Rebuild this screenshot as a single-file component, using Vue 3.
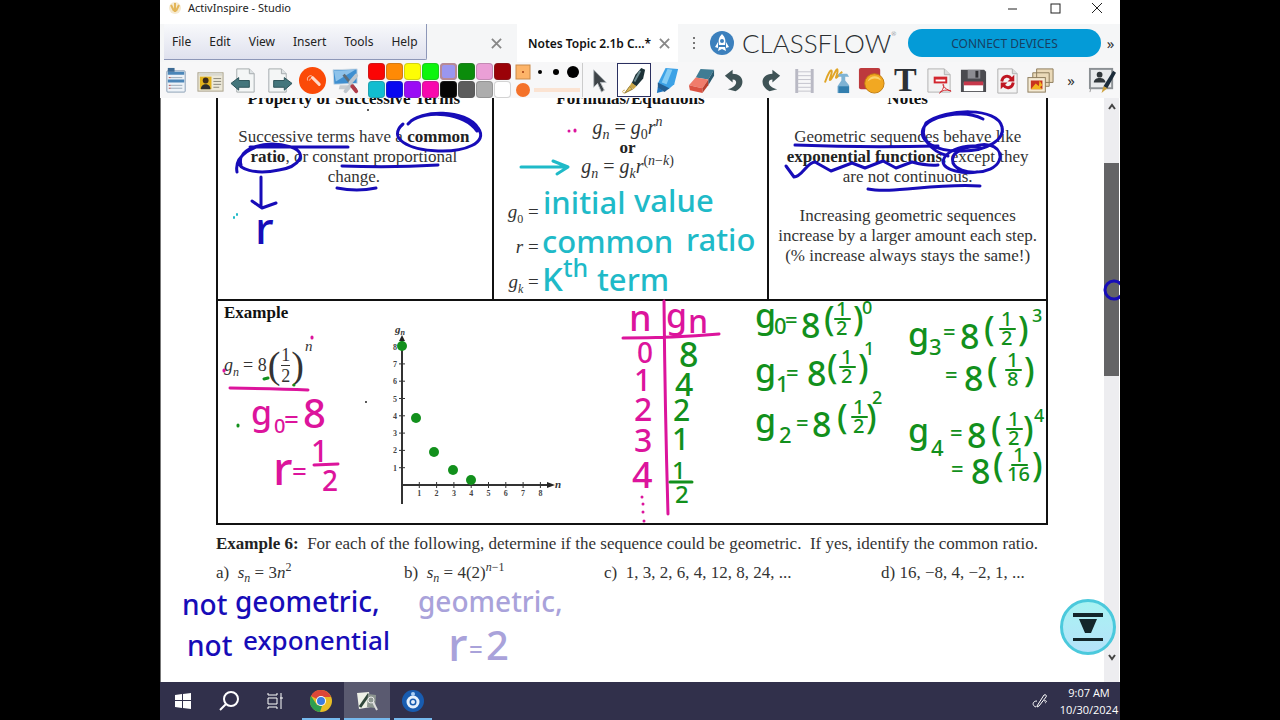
<script setup>
const menus = ['File', 'Edit', 'View', 'Insert', 'Tools', 'Help']

const swatches = [
  ['Red', '#fb0505'], ['Orange', '#ff8a05'], ['Yellow', '#fdfd05'], ['Lime', '#0df50d'],
  ['Lavender', '#9a96f0'], ['Green', '#0b8c0b'], ['Pink', '#ea9fd6'], ['Dark red', '#9b0208'],
  ['Cyan', '#12bdd0'], ['Blue', '#0808f0'], ['Violet', '#9a0cf5'], ['Magenta', '#f808ae'],
  ['Black', '#050505'], ['Dark grey', '#5c5c5c'], ['Grey', '#adadad'], ['White', '#ffffff']
]

const leftTools = ['browser', 'profile', 'prev', 'next', 'annotate', 'desktop']
const rightTools = ['select', 'pen', 'highlighter', 'eraser', 'undo', 'redo', 'grid', 'clear', 'shapes', 'text', 'pdf', 'save', 'reset', 'media']

const CYAN = '#1fbac8'
const BLUE = '#170cb8'
const PINK = '#dc149c'
const GREEN = '#12901c'
const LILAC = '#a9a2da'

// Each note is one written phrase; parts are [x, baseline, size, text].
const notes = [
  { c: BLUE, p: [[255, 244, 44, 'r']] },
  { c: CYAN, p: [[543, 214, 31, 'initial'], [634, 212, 31, 'value']] },
  { c: CYAN, p: [[542, 253, 31, 'common'], [686, 251, 31, 'ratio']] },
  { c: CYAN, p: [[542, 291, 33, 'K'], [563, 277, 25, 'th'], [597, 291, 31, 'term']] },
  { c: PINK, p: [[251, 425, 34, 'g'], [274, 433, 20, '0'], [284, 428, 26, '='], [303, 428, 40, '8']] },
  { c: PINK, p: [[273, 485, 46, 'r'], [292, 480, 26, '='], [311, 462, 30, '1'], [322, 491, 28, '2']] },
  { c: PINK, p: [[629, 331, 36, 'n']] },
  { c: PINK, p: [[666, 328, 34, 'g'], [688, 333, 32, 'n']] },
  { c: PINK, p: [[637, 363, 28, '0']] },
  { c: PINK, p: [[634, 391, 30, '1']] },
  { c: PINK, p: [[634, 421, 32, '2']] },
  { c: PINK, p: [[634, 452, 32, '3']] },
  { c: PINK, p: [[632, 488, 36, '4']] },
  { c: GREEN, p: [[679, 367, 34, '8']] },
  { c: GREEN, p: [[675, 396, 32, '4']] },
  { c: GREEN, p: [[673, 421, 30, '2']] },
  { c: GREEN, p: [[672, 450, 30, '1']] },
  { c: GREEN, p: [[672, 479, 24, '1'], [675, 503, 24, '2']] },
  { c: BLUE, p: [[182, 615, 28, 'not'], [235, 612, 28, 'geometric,']] },
  { c: BLUE, p: [[187, 656, 28, 'not'], [243, 650, 26, 'exponential']] },
  { c: LILAC, p: [[418, 612, 28, 'geometric,']] },
  { c: LILAC, p: [[448, 661, 46, 'r'], [469, 658, 24, '='], [486, 660, 40, '2']] }
]

// One written term: g(sub) = 8(1/den)^sup. g and sub are left out on continued lines.
const terms = [
  { g: [755, 328], sub: [774, 334, '0'], eq: [785, 328], e: [801, 338], l: 824, f: 842, y: 319, den: '2', r: 853, sup: [862, 314, '0'] },
  { g: [755, 383], sub: [776, 392, '1'], eq: [786, 381], e: [807, 386], l: 827, f: 847, y: 367, den: '2', r: 858, sup: [864, 355, '1'] },
  { g: [755, 433], sub: [779, 443, '2'], eq: [796, 431], e: [812, 437], l: 837, f: 859, y: 417, den: '2', r: 866, sup: [872, 404, '2'] },
  { g: [908, 347], sub: [929, 355, '3'], eq: [943, 340], e: [960, 349], l: 984, f: 1007, y: 329, den: '2', r: 1018, sup: [1032, 322, '3'] },
  { eq: [945, 383], e: [964, 391], l: 987, f: 1013, y: 370, den: '8', r: 1024 },
  { g: [908, 443], sub: [931, 456, '4'], eq: [950, 441], e: [967, 448], l: 991, f: 1014, y: 429, den: '2', r: 1023, sup: [1034, 422, '4'] },
  { eq: [951, 477], e: [971, 484], l: 993, f: 1019, y: 465, den: '16', r: 1032 }
]

const ticks = [1, 2, 3, 4, 5, 6, 7, 8]
const points = [[22, 27], [36, 99], [54, 133], [73, 151], [91, 161]]
</script>

<template>
  <main class="stage">
    <div class="screen">
      <header class="titlebar">
        <svg class="app-mark" viewBox="0 0 14 14"><circle cx="7" cy="7" r="6" fill="#f6ead0" /><path d="M3 4l3 6M7 2v9M11 4l-3 6" stroke="#e3b659" fill="none" stroke-width="2" /></svg>
        <span class="app-name">ActivInspire - Studio</span>
        <button class="win" aria-label="Minimise"><svg viewBox="0 0 12 12"><path d="M1 7h9" /></svg></button>
        <button class="win" aria-label="Maximise"><svg viewBox="0 0 12 12"><rect x="2" y="2" width="9" height="9" /></svg></button>
        <button class="win" aria-label="Close"><svg viewBox="0 0 12 12"><path d="M1 1l10 10M11 1L1 11" /></svg></button>
      </header>

      <div class="tabrow">
        <nav class="menu">
          <button v-for="m in menus" :key="m">{{ m }}</button>
        </nav>
        <button class="tab-x lone" aria-label="Close tab"><svg viewBox="0 0 12 12"><path d="M1 1l10 10M11 1L1 11" /></svg></button>
        <div class="tab">
          <span>Notes Topic 2.1b C...*</span>
          <button class="tab-x" aria-label="Close Notes Topic 2.1b"><svg viewBox="0 0 12 12"><path d="M1 1l10 10M11 1L1 11" /></svg></button>
        </div>
        <button class="dots" aria-label="More tabs"><svg viewBox="0 0 4 14"><path d="M1 2h2M1 7h2M1 12h2" stroke="#777" stroke-width="2" /></svg></button>
        <svg class="rocket" viewBox="0 0 24 24">
          <circle cx="12" cy="12" r="12" fill="#3c80bd" />
          <path d="M12 3c3 3 4 6 3 11H9c-1-5 0-8 3-11zM8 11l-3 5 3 1zM16 11l3 5-3 1zM9 16h6l1 4-4-2-4 2z" fill="#fff" />
          <circle cx="12" cy="10" r="2" fill="#3c80bd" />
        </svg>
        <div class="brand">CLASSFLOW<sup>®</sup></div>
        <button class="connect">CONNECT DEVICES</button>
        <button class="more" aria-label="More">»</button>
      </div>

      <div class="toolbar">
        <div class="left-tools">
          <button v-for="t in leftTools" :key="t" class="tool" :aria-label="t">
            <svg v-if="t === 'browser'" viewBox="0 0 30 30">
              <rect x="5" y="5" width="19" height="22" rx="1" fill="#eef3f8" stroke="#8ba0b5" /><path d="M6 6h17v3H6zM6 14h17v3H6z" fill="#4b86b8" />
              <path d="M6 2h7v4H6z" fill="#3d6b95" /><path d="M9 12h12M9 20h12M9 23h12" stroke="#9aabba" /><path d="M7 12h2M7 20h2M7 23h2" stroke="#b34a4a" />
            </svg>
            <svg v-else-if="t === 'profile'" viewBox="0 0 30 30">
              <rect x="2" y="7" width="26" height="19" fill="#ece8d8" stroke="#a9a28b" /><path d="M3 7h24v3H3z" fill="#d8d8cf" /><rect x="4" y="11" width="12" height="13" fill="#e2b21c" />
              <circle cx="10" cy="15" r="3" fill="#3b2a1a" /><path d="M5 24c0-7 10-7 10 0z" fill="#2c2c2c" /><path d="M18 13h8M18 16h8M18 19h8M18 22h6" stroke="#8a8779" />
            </svg>
            <svg v-else-if="t === 'prev'" viewBox="0 0 30 30">
              <path d="M7 3h13l5 5v19H7z" fill="#f4f6f6" stroke="#a5abad" /><path d="M20 3v5h5" fill="#dde2e4" stroke="#a5abad" /><path d="M1 18l8-6v3h11v7H9v3z" fill="#44767c" stroke="#2d5358" />
            </svg>
            <svg v-else-if="t === 'next'" viewBox="0 0 30 30">
              <path d="M5 3h13l5 5v19H5z" fill="#f4f6f6" stroke="#a5abad" /><path d="M18 3v5h5" fill="#dde2e4" stroke="#a5abad" /><path d="M29 18l-8-6v3H10v7h11v3z" fill="#44767c" stroke="#2d5358" />
            </svg>
            <svg v-else-if="t === 'annotate'" viewBox="0 0 30 30">
              <circle cx="15" cy="15" r="14" fill="#fb4a08" /><path d="M15 12l7 7" stroke="#ffd9c9" stroke-width="3" stroke-linecap="round" /><path d="M10 15c-1-3 1-5 4-5M12 15c0-1 1-2 2-2" stroke="#ffd9c9" fill="none" />
            </svg>
            <svg v-else viewBox="0 0 30 30">
              <path d="M1 4l25-1v15L2 19z" fill="#3f8fd0" stroke="#cfdce6" /><path d="M2 5l22-1L4 16z" fill="#8dc2ea" /><path d="M8 20h9l2 4H7z" fill="#c7ccd0" />
              <path d="M12 9l13 16" stroke="#5f6d78" stroke-width="3" /><path d="M25 10l-6 7M14 26l6-7" stroke="#bfc7ce" stroke-width="4" stroke-linecap="round" /><path d="M21 21l4 5" stroke="#b03c48" stroke-width="4" stroke-linecap="round" />
            </svg>
          </button>
        </div>
        <div class="palette">
          <button v-for="s in swatches" :key="s[0]" class="swatch" :class="{ chosen: s[0] === 'Lavender' }" :style="{ background: s[1] }" :aria-label="s[0]"></button>
        </div>
        <svg class="widths" viewBox="0 0 68 36">
          <rect x="2" y="3" width="14" height="14" fill="#fdb469" stroke="#c98a4a" /><circle cx="9" cy="10" r="1" fill="#a03a10" />
          <circle cx="26" cy="10" r="2" /><circle cx="42" cy="10" r="3" /><circle cx="59" cy="10" r="6" />
          <path d="M20 28h46" stroke="#fbe3d2" stroke-width="4" /><circle cx="9" cy="28" r="7" fill="#f4722a" />
        </svg>
        <div class="right-tools">
          <button v-for="t in rightTools" :key="t" class="tool" :class="{ active: t === 'pen' }" :aria-label="t">
            <svg v-if="t === 'select'" viewBox="0 0 30 30"><path d="M9 4l13 13-6 0 4 8-3 2-4-9-4 4z" fill="#3e4448" stroke="#b9bec2" /></svg>
            <svg v-else-if="t === 'pen'" viewBox="0 0 30 30">
              <path d="M23 2l4 2-2 9-7 8-5-3 4-9z" fill="#1d3237" /><path d="M22 5l-6 11" stroke="#6d8c92" stroke-width="2" /><path d="M13 17l5 4-3 3-4-3z" fill="#c9a548" /><path d="M11 21l3 3-8 4z" fill="#e0bb55" stroke="#8f7834" /><path d="M6 28c-3 0-3-3 0-3" stroke="#cda752" fill="none" />
            </svg>
            <svg v-else-if="t === 'highlighter'" viewBox="0 0 30 30"><path d="M13 2l13 1-4 16-6 5-11-6z" fill="#3da2e6" /><path d="M15 3l5 1-6 15-5-2z" fill="#84cdf5" /><path d="M5 17l12 6-5 4-7-4z" fill="#235f93" /><path d="M5 22l6 4-7 2z" fill="#1d74be" /></svg>
            <svg v-else-if="t === 'eraser'" viewBox="0 0 30 30"><path d="M14 3l14 1-6 10-13-2z" fill="#3f7c94" /><path d="M28 4v6l-6 10v-6z" fill="#2b5b70" /><path d="M9 12l13 2-6 9-14-3z" fill="#f07c6b" /><path d="M2 20l14 3v5L3 25z" fill="#dc5242" /><path d="M22 14v6l-6 8v-5z" fill="#b8402f" /></svg>
            <svg v-else-if="t === 'undo'" viewBox="0 0 30 30"><path d="M4 10l8-6v4c12 0 14 13 3 18l-8-2c10-2 11-10 5-10v3z" fill="#3f5356" /></svg>
            <svg v-else-if="t === 'redo'" viewBox="0 0 30 30"><path d="M26 10l-8-6v4C6 8 4 21 15 26l8-2c-10-2-11-10-5-10v3z" fill="#3f5356" /></svg>
            <svg v-else-if="t === 'grid'" viewBox="0 0 30 30"><path d="M8 3v25M24 3v25" stroke="#b9b9c4" stroke-width="3" /><path d="M9 6h14M9 10h14M9 14h14M9 18h14M9 22h14M9 26h14" stroke="#c3c3cc" /></svg>
            <svg v-else-if="t === 'clear'" viewBox="0 0 30 30"><path d="M2 17C5 8 8 3 9 5s-4 12-1 9 6-13 7-10-3 9-1 8 4-5 6-6" stroke="#e0a527" stroke-width="2" fill="none" /><path d="M16 8h9l2 3h-4v4l4 5v8H15v-7l4-6v-4h-3z" fill="#7fb3d4" /><path d="M16 21h11v7H16z" fill="#327eae" /></svg>
            <svg v-else-if="t === 'shapes'" viewBox="0 0 30 30"><rect x="2" y="2" width="22" height="22" rx="2" fill="#bd3a3d" /><circle cx="18" cy="18" r="10" fill="#f2a822" stroke="#c17d11" /><path d="M11 16c2-7 12-7 14-1-5-3-9-3-14 1z" fill="#fbd36a" /></svg>
            <span v-else-if="t === 'text'" class="tee">T</span>
            <svg v-else-if="t === 'pdf'" viewBox="0 0 30 30"><path d="M3 3h17l6 6v18H3z" fill="#f2f2f2" stroke="#b1b1b1" /><path d="M20 3v6h6" fill="#ddd" stroke="#b1b1b1" /><path d="M9 11h14v7H9z" fill="#d2262e" /><path d="M11 15h10" stroke="#fff" stroke-width="2" /><path d="M15 28c4-3 5-8 4-9s-1 4 8 7c-5-2-9-1-12 2z" stroke="#d2262e" fill="none" /></svg>
            <svg v-else-if="t === 'save'" viewBox="0 0 30 30"><path d="M2 4h24l2 2v21H2z" fill="#4b4b50" /><path d="M9 4h13v9H9z" fill="#8c8c92" /><path d="M17 5h3v7h-3z" fill="#303034" /><path d="M5 17h20v9H5z" fill="#fff" /><path d="M5 16h20v4H5z" fill="#c7384b" /></svg>
            <svg v-else-if="t === 'reset'" viewBox="0 0 30 30"><path d="M5 3h15l5 5v20H5z" fill="#f4f4f4" stroke="#b1b1b1" /><path d="M20 3v5h5" fill="#ddd" stroke="#b1b1b1" /><path d="M9 16c1-6 7-7 10-3M21 17c-1 6-7 7-10 3" stroke="#c01722" stroke-width="3" fill="none" /><path d="M22 9v7h-7zM8 24v-7h7z" fill="#c01722" /></svg>
            <svg v-else viewBox="0 0 30 30"><path d="M11 3h17v14H11zM7 7h17v14H7z" fill="#ead9b8" stroke="#8d7b5b" /><rect x="2" y="12" width="18" height="15" fill="#f4ead3" stroke="#8d7b5b" /><path d="M5 15h12v9H5z" fill="#c8341f" /><path d="M5 24l5-6 7 6zM14 15l3 5-4 3z" fill="#f3b41f" /></svg>
          </button>
        </div>
        <button class="more wide" aria-label="More tools">»</button>
        <button class="tool last" aria-label="Presenter">
          <svg viewBox="0 0 30 30"><rect x="2" y="3" width="23" height="20" fill="#e8eaec" stroke="#8b9094" stroke-width="2" /><circle cx="12" cy="9" r="3" fill="#30363a" /><path d="M6 17c0-6 12-6 12 0z" fill="#30363a" /><path d="M26 5l3 2-9 16-4-2z" fill="#1c2c3a" /><path d="M16 21l4 2-6 5z" fill="#cda13c" /><path d="M3 23l-1 4" stroke="#999" /></svg>
        </button>
      </div>

      <section class="canvas">
        <article class="paper">
          <div class="sheet">
            <div class="cell">
              <h3>Property of Successive Terms</h3>
              <p>Successive terms have a <b>common ratio</b>, or constant proportional change.</p>
            </div>
            <div class="cell">
              <h3>Formulas/Equations</h3>
              <div class="formulas">
                <div><i>g<sub>n</sub></i> = <i>g</i><sub>0</sub><i>r<sup>n</sup></i></div>
                <b>or</b>
                <div><i>g<sub>n</sub></i> = <i>g<sub>k</sub>r</i><sup>(<i>n</i>−<i>k</i>)</sup></div>
              </div>
              <div class="defs">
                <div><i>g</i><sub>0</sub> =</div>
                <div><i>r</i> =</div>
                <div><i>g<sub>k</sub></i> =</div>
              </div>
            </div>
            <div class="cell">
              <h3>Notes</h3>
              <p>Geometric sequences behave like<br><b>exponential functions</b>, except they are not continuous.</p>
              <p class="second">Increasing geometric sequences<br>increase by a larger amount each step.<br>(% increase always stays the same!)</p>
            </div>
            <div class="example">
              <div class="given">
                <h3>Example</h3>
                <div class="rule">
                  <i>g<sub>n</sub></i><span>= 8</span><span class="paren">(</span><span class="frac"><span>1</span><span>2</span></span><span class="paren">)</span><sup><i>n</i></sup>
                </div>
              </div>
              <svg class="plot" viewBox="0 0 190 190">
                <path d="M22 20v165M22 166h148" stroke="#333" stroke-width="2" fill="none" />
                <path d="M19 22l3-6 3 6zM167 163l8 3-8 3z" fill="#222" />
                <text x="15" y="14" class="axis">g<tspan class="tiny" dy="2">n</tspan></text>
                <text x="175" y="169" class="axis">n</text>
                <g v-for="t in ticks" :key="t">
                  <path :d="`M${22 + t * 17.3} 163v6M19 ${166 - t * 17.3}h6`" stroke="#333" />
                  <text :x="22 + t * 17.3" y="177" class="num" text-anchor="middle">{{ t }}</text>
                  <text x="15" :y="169 - t * 17.3" class="num" text-anchor="middle">{{ t }}</text>
                </g>
                <circle v-for="p in points" :key="p[0]" :cx="p[0]" :cy="p[1]" r="5" fill="#12901c" />
              </svg>
            </div>
          </div>
          <p class="prompt"><b>Example 6:</b>&nbsp; For each of the following, determine if the sequence could be geometric.&nbsp; If yes, identify the common ratio.</p>
          <div class="parts">
            <div>a)&nbsp; <i>s<sub>n</sub></i> = 3<i>n</i><sup>2</sup></div>
            <div>b)&nbsp; <i>s<sub>n</sub></i> = 4(2)<sup><i>n</i>−1</sup></div>
            <div>c)&nbsp; 1, 3, 2, 6, 4, 12, 8, 24, ...</div>
            <div>d) 16, −8, 4, −2, 1, ...</div>
          </div>
        </article>

        <div class="scroll">
          <button aria-label="Scroll up"><svg viewBox="0 0 10 10"><path d="M2 7l3-4 3 4" /></svg></button>
          <div class="track"><div class="thumb"></div></div>
          <button aria-label="Scroll down"><svg viewBox="0 0 10 10"><path d="M2 3l3 4 3-4" /></svg></button>
        </div>

        <svg class="ink" viewBox="160 98 960 584" preserveAspectRatio="xMinYMin meet">
          <g :stroke="BLUE">
            <path d="M408 124c12-15 58-15 70 4 11 15-14 24-40 23-30-1-51-13-35-27M411 121c15-11 52-9 66 10" />
            <path d="M250 147h98M342 166q50 2 96-1M337 188q20 4 39 0M241 165c-5-18 26-25 50-18 18 6 8 20-12 23-24 5-42-1-40-9M237 172c-3-16 16-29 39-27" />
            <path d="M261 177v29M252 201l10 7 14-5" />
            <path d="M795 145q70 3 143 1M786 166l8 11c8 0 13-15 21-15l16 9 21-8 13 5 18-7 13 7 16-6q15 4 26 3" />
            <path d="M983 119c-20-10-55-3-60 10-4 12 12 22 36 22 30 1 46-13 43-24-4-20-56-19-76-4-8 13 4 28 22 33" />
            <path d="M972 147c18-7 32 2 27 14-6 14-40 15-46 2-3-9 9-18 27-16M976 146c-16-1-31 6-33 15 0 10 22 13 34 11M868 189c24 5 66-6 112-3" />
            <circle cx="1114" cy="290" r="9" />
          </g>
          <g :stroke="CYAN"><path d="M521 167h46M553 161l15 6-11 7" /><path d="M234 218v-1M237 214v1" stroke-width="2" /></g>
          <g :stroke="PINK">
            <path d="M569 131v0M575 130v1M312 337v1M224 370v1" />
            <path d="M230 388q50 1 78 2M314 465l24-1M623 338q50 0 96-4M664 301q1 110 4 213M642 497v0M643 504v0M643 512v0M644 521v0" />
          </g>
          <g :stroke="GREEN"><path d="M238 425v1M264 379l4-1M294 385v0M670 482h22" /></g>
          <g stroke="#222" stroke-width="2"><path d="M368 110v0M366 402v0" /></g>
          <text v-for="(n, i) in notes" :key="i" :fill="n.c"><tspan v-for="(p, j) in n.p" :key="j" :x="p[0]" :y="p[1]" :font-size="p[2]">{{ p[3] }}</tspan></text>
          <g v-for="(t, i) in terms" :key="'t' + i">
            <text :fill="GREEN">
              <template v-if="t.g">
                <tspan :x="t.g[0]" :y="t.g[1]" font-size="34">g</tspan><tspan :x="t.sub[0]" :y="t.sub[1]" font-size="22">{{ t.sub[2] }}</tspan>
              </template>
              <tspan :x="t.eq[0]" :y="t.eq[1]" font-size="22">=</tspan><tspan :x="t.e[0]" :y="t.e[1]" font-size="34">8</tspan><tspan :x="t.l" :y="t.y + 12" font-size="34">(</tspan><tspan :x="t.f - 6" :y="t.y - 3" font-size="20">1</tspan><tspan :x="t.f - 6 * t.den.length" :y="t.y + 16" font-size="20">{{ t.den }}</tspan><tspan :x="t.r" :y="t.y + 12" font-size="34">)</tspan>
              <tspan v-if="t.sup" :x="t.sup[0]" :y="t.sup[1]" font-size="18">{{ t.sup[2] }}</tspan>
            </text>
            <path :d="`M${t.f - 7} ${t.y}h15`" :stroke="GREEN" stroke-width="2" />
          </g>
        </svg>

        <button class="fab" aria-label="Collapse toolbar">
          <svg viewBox="0 0 32 32"><path d="M1 2h30v4H1zM1 27h30v3H1zM7 8h18l-6 14h-6z" fill="#13262b" /></svg>
        </button>
      </section>

      <footer class="taskbar">
        <button class="task" aria-label="Start"><svg viewBox="0 0 16 16"><path d="M0 2l7-1v6H0zM8 1l8-1v7H8zM0 8h7v7l-7-1zM8 8h8v8l-8-1z" fill="#fff" /></svg></button>
        <button class="task" aria-label="Search"><svg class="big" viewBox="0 0 22 22"><circle cx="13" cy="9" r="7" fill="none" stroke="#fff" stroke-width="2" /><path d="M8 14l-6 6" stroke="#fff" stroke-width="2" /></svg></button>
        <button class="task" aria-label="Task view"><svg viewBox="0 0 16 16"><path d="M1 0v2h9V0M1 16v-2h9v2M1 5h9v6H1zM14 0v16M13 5h3" fill="none" stroke="#fff" /></svg></button>
        <button class="task open" aria-label="Chrome">
          <svg class="big" viewBox="0 0 22 22"><circle cx="11" cy="11" r="11" fill="#e8bd26" /><path d="M11 11L1 6a11 11 0 0 1 20 1H11z" fill="#dc4738" /><path d="M1 6l6 9 5 1-2 6A11 11 0 0 1 1 6z" fill="#2f9e50" /><circle cx="11" cy="11" r="5" fill="#fff" /><circle cx="11" cy="11" r="4" fill="#3c7de0" /></svg>
        </button>
        <button class="task open current" aria-label="ActivInspire">
          <svg class="big" viewBox="0 0 22 22"><path d="M1 3l12-1 2 15-12 2z" fill="#eef0e6" /><path d="M4 17L13 4" stroke="#31473b" stroke-width="3" /><path d="M12 4l8 1-1 13-8-1z" fill="#8d9690" /><circle cx="15" cy="10" r="3" fill="none" stroke="#e9e9e9" /><path d="M17 12l4 8" stroke="#ddd" stroke-width="2" /></svg>
        </button>
        <button class="task open" aria-label="ClassFlow">
          <svg class="big" viewBox="0 0 22 22"><circle cx="11" cy="11" r="11" fill="#185cb0" /><circle cx="11" cy="12" r="5" fill="none" stroke="#e5f0fc" stroke-width="3" /><circle cx="11" cy="12" r="2" fill="#e5f0fc" /><circle cx="11" cy="4" r="2" fill="#a9cdf4" /></svg>
        </button>
        <span class="fill"></span>
        <svg class="stylus" viewBox="0 0 16 16"><path d="M5 13L12 2c2-1 3 1 2 2L7 13l-2 1zM5 8c-5 0-5 5-1 6M12 8c3-1 3 1 1 2" fill="none" stroke="#fff" /></svg>
        <div class="clock"><span>9:07 AM</span><span>10/30/2024</span></div>
      </footer>
    </div>
  </main>
</template>

<style>
body { background: #000; }
</style>

<style scoped>
.stage { height: 100vh; background: #000; font-family: "Noto Sans", sans-serif; }
.screen { width: 75%; height: 100%; margin: 0 auto; display: flex; flex-direction: column; background: #fff; overflow: hidden; }
button { border: 0; padding: 0; background: none; font: inherit; color: inherit; display: flex; align-items: center; justify-content: center; }

.titlebar { display: flex; align-items: flex-start; flex: none; height: 24px; padding: 0 2px 0 8px; color: #222; font-size: 11px; line-height: 16px; }
.app-mark { width: 14px; height: 14px; margin: 1px 6px 0 0; }
.app-name { flex: 1; }
.win { width: 42px; height: 16px; }
.win svg { width: 12px; height: 12px; fill: none; stroke: #222; }

.tabrow { flex: none; height: 38px; display: flex; align-items: center; background: #f5f6f7; font-size: 12px; }
.menu { display: flex; gap: 18px; height: 36px; align-self: flex-start; margin-left: 4px; padding: 0 8px; box-sizing: border-box; background: linear-gradient(#f8f9fb, #dfe1ee); border: solid #8d97b8; border-width: 0 1px 1px 0; border-radius: 0 0 2px 0; color: #222; }
.tab-x { width: 12px; height: 12px; }
.tab-x svg { width: 11px; height: 11px; fill: none; stroke: #888; stroke-width: 2; }
.lone { margin: 0 15px 0 auto; }
.tab { align-self: stretch; display: flex; align-items: center; justify-content: space-between; gap: 4px; width: 142px; padding: 0 8px 0 11px; background: #fff; color: #111; font-weight: 600; white-space: nowrap; }
.dots { width: 32px; }
.dots svg { width: 4px; height: 14px; }
.rocket { width: 24px; height: 24px; flex: none; }
.brand { width: 167px; padding-left: 8px; box-sizing: border-box; font: 300 26px/38px Lato, sans-serif; color: #2b2f32; display: flex; }
.brand sup { font-size: 6px; line-height: 20px; }
.connect { width: 193px; height: 28px; border-radius: 14px; background: #049bd7; color: #173f63; margin-left: 7px; }
.more { width: 19px; font-size: 15px; color: #333; }
.more.wide { width: 34px; }

.toolbar { flex: none; height: 36px; display: flex; align-items: center; background: #f7f7f8; }
.left-tools { display: flex; width: 203px; }
.tool { flex: 1; height: 34px; }
.tool svg { width: 29px; height: 29px; flex: none; }
.tool.active { background: #fff; outline: 1px solid #2b3060; outline-offset: -1px; }
.tool.last { flex: none; width: 28px; margin-right: 4px; }
.palette { display: grid; grid-template-columns: repeat(8, 17px); gap: 1px; margin-left: 5px; }
.swatch { height: 17px; border-radius: 4px; box-shadow: inset 0 0 0 1px rgba(80, 80, 80, .25); }
.chosen { box-shadow: inset 0 0 0 2px #b88a94; }
.widths { width: 68px; height: 36px; margin-left: 3px; }
.right-tools { flex: 1; display: flex; border-left: 1px solid #ccc; margin-right: -4px; }
.tee { font: bold 34px/34px "Liberation Serif", serif; color: #2c3136; }

.canvas { position: relative; flex: 1; min-height: 0; display: flex; overflow: hidden; }
.paper { flex: 1; min-width: 0; margin: -9px 0 0; padding: 0 56px 0 55px; border-left: 1px solid #777; color: #333; font: 17px/20px "Liberation Serif", serif; }
.sheet { display: grid; grid-template-columns: 275fr 277fr 280fr; border: 2px solid #111; border-top: 0; }
.cell { height: 212px; box-sizing: border-box; padding: 0 8px; text-align: center; border-bottom: 2px solid #111; white-space: nowrap; }
.cell + .cell { border-left: 2px solid #111; }
.cell:first-child { white-space: normal; padding: 0 16px 0 14px; }
.cell:nth-child(3) { padding: 0; white-space: normal; }
.cell:nth-child(3) p:nth-of-type(1) { padding: 0 12px; }
h3 { margin: 0; font-size: 17px; line-height: 20px; color: #111; }
p { margin: 18px 0 0; }
b { color: #222; }
.cell .second { margin: 19px -8px 0; }
sub, sup { font-size: 12px; line-height: 0; }
.formulas { margin: 9px 6px 0 0; line-height: 19px; font-size: 20px; }
.formulas b { font-size: 17px; }
.formulas sub, .formulas sup { font-size: 14px; }
.defs { margin: 18px 0 0; width: 37px; text-align: right; line-height: 35px; font-size: 19px; display: flex; flex-direction: column; align-items: flex-end; }
.example { grid-column: 1 / -1; display: flex; height: 222px; color: #333; }
.given { width: 166px; padding: 2px 0 0 6px; box-sizing: border-box; }
.rule { display: flex; align-items: center; margin-top: 20px; font-size: 18px; gap: 4px; height: 44px; }
.rule sup { align-self: flex-start; line-height: 6px; font-size: 15px; }
.paren { font-size: 38px; line-height: 44px; }
.rule .paren { margin: 0 -3px; }
.frac { display: flex; flex-direction: column; }
.frac span:first-child { border-bottom: 1px solid #333; }
.plot { width: 190px; height: 190px; margin-top: 18px; margin-left: -4px; }
.axis { font: italic bold 11px "Liberation Serif", serif; fill: #333; }
.tiny { font-size: 8px; }
.num { font: bold 8px "Liberation Serif", serif; fill: #444; }
.prompt { margin: 9px 0 0; white-space: nowrap; }
.parts { display: grid; grid-template-columns: 188fr 200fr 277fr 167fr; margin-top: 9px; white-space: nowrap; }

.scroll { width: 15px; display: flex; flex-direction: column; background: #ededf0; margin-right: 1px; }
.scroll button { height: 18px; }
.scroll button:last-child { margin-bottom: 16px; }
.scroll button svg { width: 10px; height: 10px; fill: none; stroke: #444; stroke-width: 2; }
.track { flex: 1; padding-top: 47px; box-sizing: border-box; }
.thumb { height: 44%; background: #646466; }
.ink { position: absolute; inset: 0; width: 100%; height: 100%; pointer-events: none; fill: none; stroke-width: 3; stroke-linecap: round; stroke-linejoin: round; font-family: "Noto Sans", sans-serif; font-weight: 500; }
.fab { position: absolute; right: 4px; bottom: 27px; width: 56px; height: 56px; border-radius: 50%; border: 3px solid #4bc9dc; background: linear-gradient(#a8f3f2, #b5e2fa); }
.fab svg { width: 32px; height: 32px; flex: none; }

.taskbar { flex: none; height: 38px; display: flex; align-items: center; background: #31304b; color: #fff; font-size: 12px; }
.task { width: 46px; height: 38px; box-sizing: border-box; }
.task svg { width: 16px; height: 16px; }
.task svg.big { width: 22px; height: 22px; }
.open { position: relative; }
.open::after { content: ""; position: absolute; left: 4px; right: 4px; bottom: 0; height: 2px; background: #76b9ed; }
.current { background: #5a5a70; }
.current::after { left: 0; right: 0; }
.fill { flex: 1; }
.stylus { width: 16px; height: 16px; margin-right: 12px; }
.clock { display: flex; flex-direction: column; align-items: center; width: 58px; margin-right: 2px; white-space: nowrap; font: 11px/17px "Open Sans", sans-serif; }
</style>
